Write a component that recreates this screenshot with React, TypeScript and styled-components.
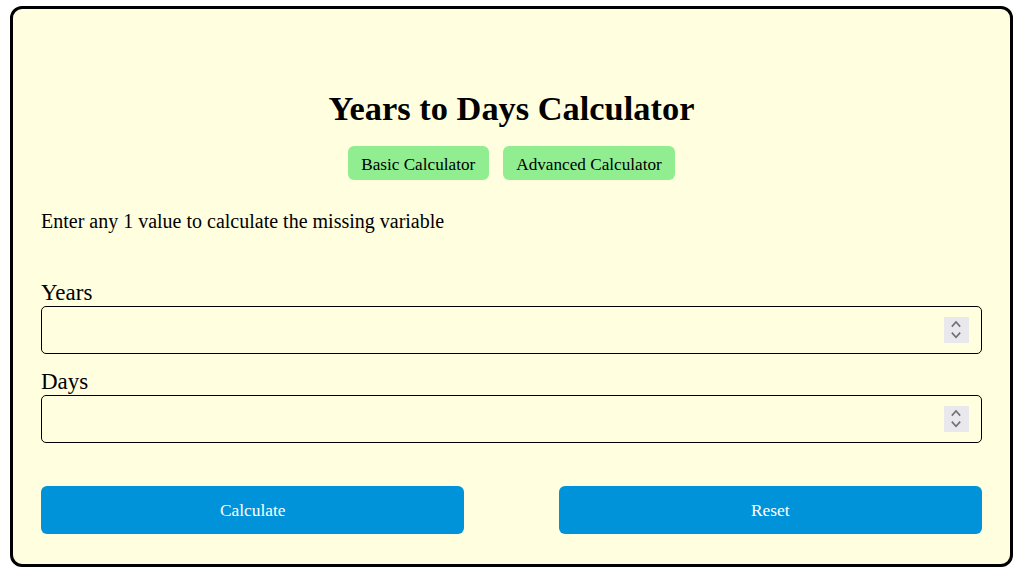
import React from "react";
import styled, { createGlobalStyle } from "styled-components";

const Global = createGlobalStyle`
  * { box-sizing: border-box; }
  html, body { margin: 0; padding: 0; background: #ffffff; }
  body { font-family: "Liberation Serif", "Times New Roman", serif; color: #000; }
`;

const Page = styled.div`
  padding: 6px 11px 10px 10px;
`;

const Card = styled.div`
  width: 1003px;
  background: #ffffe0;
  border: 3px solid #000;
  border-radius: 12px;
  padding: 79px 28px 30px 28px;
  display: flex;
  flex-direction: column;
`;

const Title = styled.h1`
  margin: 0;
  font-size: 34.4px;
  font-weight: bold;
  line-height: 40px;
  text-align: center;
`;

const TabRow = styled.div`
  display: flex;
  justify-content: center;
  gap: 14px;
  margin-top: 18px;
`;

const TabButton = styled.button`
  background: #90ee90;
  border: none;
  border-radius: 6px;
  padding: 9px 13.5px 5px;
  font-family: "Liberation Serif", "Times New Roman", serif;
  font-size: 17.2px;
  line-height: 20px;
  color: #000;
  cursor: pointer;
`;

const Hint = styled.p`
  margin: 29px 0 0 0;
  font-size: 20px;
  line-height: 24px;
`;

const Fields = styled.div`
  display: flex;
  flex-direction: column;
  margin-top: 48px;
`;

const Field = styled.div<{ $first?: boolean }>`
  display: flex;
  flex-direction: column;
  gap: 1px;
  margin-top: ${(p) => (p.$first ? "0" : "16px")};
`;

const Label = styled.label`
  font-size: 23px;
  line-height: 24px;
`;

const InputWrap = styled.div`
  position: relative;
`;

const NumberInput = styled.input`
  display: block;
  height: 48px;
  width: 100%;
  border: 1px solid #000;
  border-radius: 5px;
  background: transparent;
  padding: 10px 44px 10px 12px;
  font-family: "Liberation Serif", "Times New Roman", serif;
  font-size: 22px;
  outline: none;
  -moz-appearance: textfield;
  &::-webkit-inner-spin-button,
  &::-webkit-outer-spin-button {
    -webkit-appearance: none;
    margin: 0;
  }
`;

const Spinner = styled.span`
  position: absolute;
  top: 11px;
  right: 13px;
  width: 25px;
  height: 26px;
  background: #e9e9ed;
  display: flex;
  pointer-events: none;
`;

const ActionRow = styled.div`
  display: flex;
  justify-content: space-between;
  margin-top: 43px;
`;

const ActionButton = styled.button`
  width: 45%;
  height: 48px;
  background: #0093d9;
  border: none;
  border-radius: 6px;
  color: #fff;
  font-family: "Liberation Serif", "Times New Roman", serif;
  font-size: 17.4px;
  cursor: pointer;
`;

function SpinIcon() {
  return (
    <svg width="25" height="26" viewBox="0 0 25 26" fill="none">
      <path d="M7.8 9.6 L12 5 L16.2 9.6" stroke="#707070" strokeWidth="1.6" />
      <path d="M7.8 15.6 L12 20.2 L16.2 15.6" stroke="#707070" strokeWidth="1.6" />
    </svg>
  );
}

function NumberField({ id, label, first }: { id: string; label: string; first?: boolean }) {
  return (
    <Field $first={first}>
      <Label htmlFor={id}>{label}</Label>
      <InputWrap>
        <NumberInput id={id} type="number" />
        <Spinner>
          <SpinIcon />
        </Spinner>
      </InputWrap>
    </Field>
  );
}

export default function App() {
  return (
    <>
      <Global />
      <Page>
        <Card>
          <Title>Years to Days Calculator</Title>
          <TabRow>
            <TabButton>Basic Calculator</TabButton>
            <TabButton>Advanced Calculator</TabButton>
          </TabRow>
          <Hint>Enter any 1 value to calculate the missing variable</Hint>
          <Fields>
            <NumberField id="years" label="Years" first />
            <NumberField id="days" label="Days" />
          </Fields>
          <ActionRow>
            <ActionButton>Calculate</ActionButton>
            <ActionButton>Reset</ActionButton>
          </ActionRow>
        </Card>
      </Page>
    </>
  );
}
